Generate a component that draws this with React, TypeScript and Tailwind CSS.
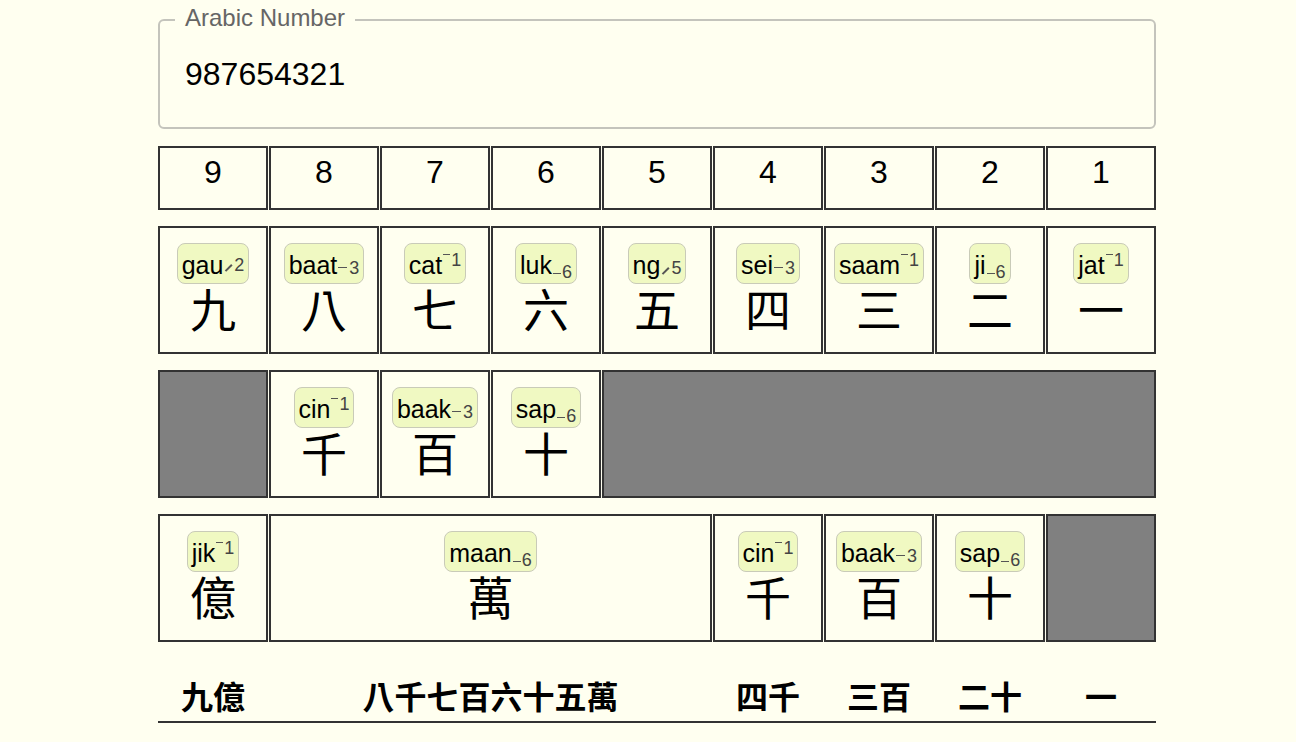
import React from 'react';

type Cell = { p?: string; t?: number; c?: string; span?: string; blank?: boolean };

const digits = ['9', '8', '7', '6', '5', '4', '3', '2', '1'];

const units: Cell[] = [
    { p: 'gau', t: 2, c: '九' },
    { p: 'baat', t: 3, c: '八' },
    { p: 'cat', t: 1, c: '七' },
    { p: 'luk', t: 6, c: '六' },
    { p: 'ng', t: 5, c: '五' },
    { p: 'sei', t: 3, c: '四' },
    { p: 'saam', t: 1, c: '三' },
    { p: 'ji', t: 6, c: '二' },
    { p: 'jat', t: 1, c: '一' },
];

const smallUnits: Cell[] = [
    { blank: true },
    { p: 'cin', t: 1, c: '千' },
    { p: 'baak', t: 3, c: '百' },
    { p: 'sap', t: 6, c: '十' },
    { blank: true, span: 'col-span-5' },
];

const bigUnits: Cell[] = [
    { p: 'jik', t: 1, c: '億' },
    { p: 'maan', t: 6, c: '萬', span: 'col-span-4' },
    { p: 'cin', t: 1, c: '千' },
    { p: 'baak', t: 3, c: '百' },
    { p: 'sap', t: 6, c: '十' },
    { blank: true },
];

const summary = [
    { text: '九億', span: '' },
    { text: '八千七百六十五萬', span: 'col-span-4' },
    { text: '四千', span: '' },
    { text: '三百', span: '' },
    { text: '二十', span: '' },
    { text: '一', span: '' },
];

// tone contour marks: wrapper shift, then the mark drawn as a small bar or slash
const toneStyle: Record<number, { shift: string; mark: string }> = {
    1: { shift: '-top-[8px]', mark: 'w-[7px] -top-[11px] mr-[1px]' },
    2: { shift: '-top-[3px]', mark: 'w-[9px] -top-[3px] -rotate-45 mr-[1px]' },
    3: { shift: 'top-0', mark: 'w-[9px] -top-[6px] mr-[2px]' },
    5: { shift: 'top-0', mark: 'w-[9px] -top-[3px] -rotate-45 mr-[1px]' },
    6: { shift: 'top-[4px]', mark: 'w-[8px] -top-[4px] mr-[1px]' },
};

const Tone: React.FC<{ t: number }> = ({ t }) => {
    const s = toneStyle[t];
    return (
        <span className={`relative ${s.shift} ml-[1px] text-[18px] text-[#444]`}>
            <span className={`relative inline-block h-[1.5px] bg-[#555] align-baseline ${s.mark}`} />
            {t}
        </span>
    );
};

const Badge: React.FC<{ p: string; t: number }> = ({ p, t }) => (
    <div className="h-[41px] px-[4px] pt-[7px] rounded-[8px] border border-[#c9cbb8] bg-[#f0f9c2] text-[25px] leading-[28px] text-black whitespace-nowrap">
        {p}
        <Tone t={t} />
    </div>
);

const UnitCell: React.FC<{ cell: Cell }> = ({ cell }) => {
    if (cell.blank) {
        return <div className={`h-[128px] border-2 border-[#333] bg-[#808080] ${cell.span ?? ''}`} />;
    }
    return (
        <div className={`h-[128px] border-2 border-[#333] bg-[#fffff0] flex flex-col items-center pt-[15px] ${cell.span ?? ''}`}>
            <Badge p={cell.p!} t={cell.t!} />
            <div className="text-[46px] leading-none text-black font-['Noto_Sans_CJK_TC',sans-serif]">{cell.c}</div>
        </div>
    );
};

export default function App() {
    return (
        <div className="min-h-screen bg-[#fffff0] font-['Liberation_Sans',Arial,sans-serif] text-black">
            <div className="ml-[158px] w-[998px] flex flex-col">
                <fieldset className="mt-[7px] px-[15px] pt-[21px] pb-[33px] border-2 border-[#c4c4bc] rounded-[6px]">
                    <legend className="relative -top-[2px] px-[10px] text-[24px] leading-[26px] text-[#666]">Arabic Number</legend>
                    <input
                        readOnly
                        value="987654321"
                        className="w-full h-[40px] pl-[10px] bg-transparent outline-none text-[32px] leading-[40px] text-black font-['Liberation_Sans',Arial,sans-serif]"
                    />
                </fieldset>

                <div className="mt-[17px] flex flex-col gap-[16px]">
                    <div className="grid grid-cols-9 gap-x-px">
                        {digits.map((d, i) => (
                            <div key={i} className="h-[64px] border-2 border-[#333] bg-[#fffff0] text-center text-[32px]">
                                {d}
                            </div>
                        ))}
                    </div>

                    <div className="grid grid-cols-9 gap-x-px">
                        {units.map((c, i) => <UnitCell key={i} cell={c} />)}
                    </div>

                    <div className="grid grid-cols-9 gap-x-px">
                        {smallUnits.map((c, i) => <UnitCell key={i} cell={c} />)}
                    </div>

                    <div className="grid grid-cols-9 gap-x-px">
                        {bigUnits.map((c, i) => <UnitCell key={i} cell={c} />)}
                    </div>

                    <div className="grid grid-cols-9 gap-x-px pt-[19px] pb-[8px] border-b-2 border-[#333]">
                        {summary.map((s, i) => (
                            <div key={i} className={`text-center text-[32px] leading-[36px] font-bold font-['Noto_Sans_CJK_TC',sans-serif] ${s.span}`}>
                                {s.text}
                            </div>
                        ))}
                    </div>
                </div>
            </div>
        </div>
    );
}
